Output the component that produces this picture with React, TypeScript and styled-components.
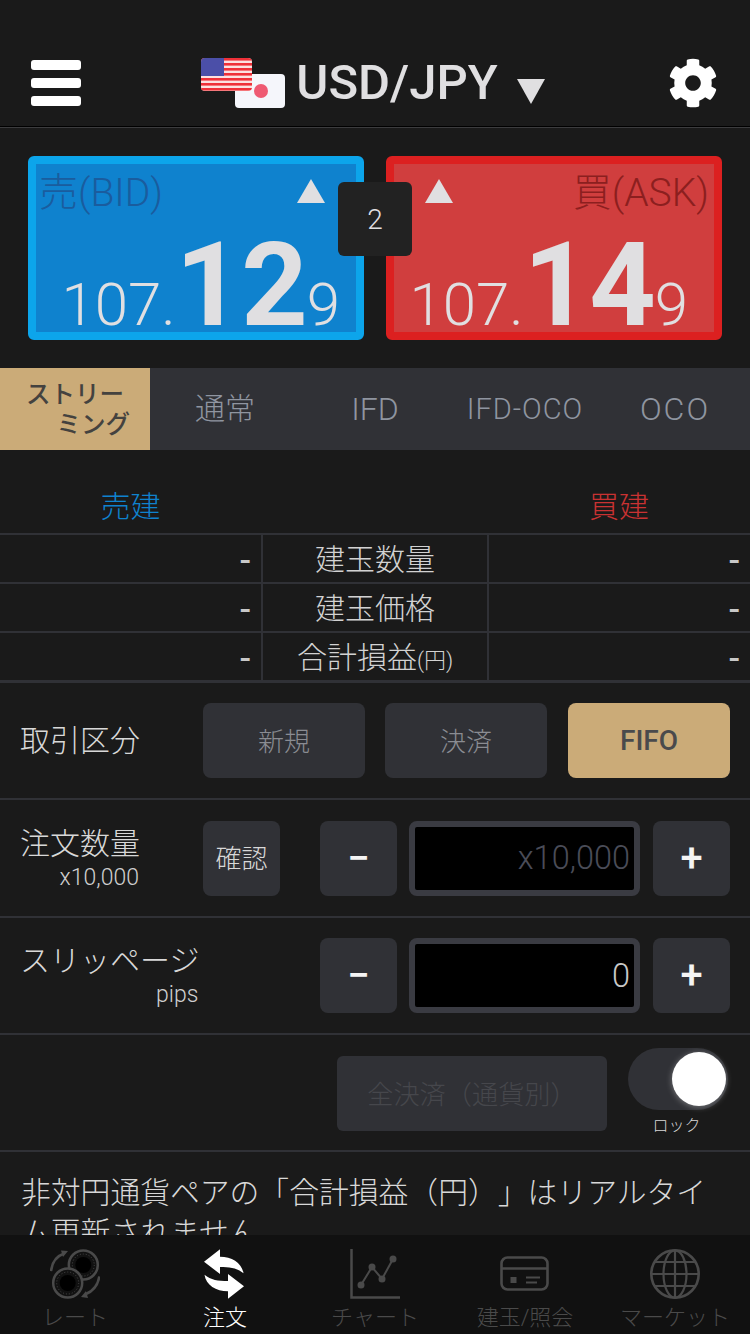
import React from 'react';
import styled, { createGlobalStyle } from 'styled-components';
import { FaCog } from 'react-icons/fa';

const GlobalStyle = createGlobalStyle`
  html, body {
    margin: 0;
    padding: 0;
    background: #1a1a1a;
  }
  * { box-sizing: border-box; }
  body {
    font-family: Roboto, "Noto Sans CJK JP", sans-serif;
    font-weight: 300;
    text-spacing-trim: space-all;
  }
`;

const Screen = styled.div`
  width: 750px;
  height: 1334px;
  display: flex;
  flex-direction: column;
  background: #1a1a1a;
  overflow: hidden;
`;

const Scroll = styled.div`
  flex: 1;
  min-height: 0;
  overflow: hidden;
`;

const Header = styled.header`
  height: 128px;
  padding: 39px 32px 1px 31px;
  display: flex;
  align-items: center;
  justify-content: space-between;
  border-bottom: 1px solid #3c3c3e;
  box-shadow: inset 0 -1px 0 #000;
`;

const Burger = styled.div`
  width: 50px;
  display: flex;
  flex-direction: column;
  gap: 8px;
`;

const BurgerBar = styled.span`
  height: 10px;
  border-radius: 3px;
  background: #fff;
`;

const Pair = styled.div`
  display: flex;
  align-items: center;
  margin-left: -3px;
`;

const PairName = styled.span`
  margin-left: 11px;
  font-size: 49px;
  font-weight: 500;
  color: #e0dfe1;
  line-height: 50px;
`;

const PairCaret = styled.span`
  margin: 18px 0 0 19px;
  width: 0;
  height: 0;
  border-left: 14px solid transparent;
  border-right: 14px solid transparent;
  border-top: 25px solid #e0dfe1;
`;

const Gear = styled(FaCog)`
  display: block;
  color: #fff;
  font-size: 50px;
`;

const Quotes = styled.section`
  position: relative;
  padding: 28px 28px 0;
  display: grid;
  grid-template-columns: 336px 336px;
  justify-content: space-between;
`;

const QuoteCard = styled.div<{ $side: 'bid' | 'ask' }>`
  height: 184px;
  border: 8px solid ${({ $side }) => ($side === 'bid' ? '#0ca5eb' : '#dc2020')};
  background: ${({ $side }) => ($side === 'bid' ? '#0f82ce' : '#d03e3e')};
  border-radius: 6px;
  display: flex;
  flex-direction: column;
  justify-content: space-between;
`;

const QuoteHead = styled.div<{ $side: 'bid' | 'ask' }>`
  display: flex;
  align-items: center;
  justify-content: space-between;
  height: 54px;
  padding: ${({ $side }) => ($side === 'bid' ? '0 31px 0 3px' : '0 5px 0 31px')};
`;

const QuoteLabel = styled.span<{ $side: 'bid' | 'ask' }>`
  font-size: 39px;
  line-height: 46px;
  margin-top: 4px;
  color: ${({ $side }) => ($side === 'bid' ? '#1a5c9e' : '#8c1f1f')};
`;

const Tick = styled.span`
  width: 0;
  height: 0;
  border-left: 14px solid transparent;
  border-right: 14px solid transparent;
  border-bottom: 24px solid #e0dfe1;
`;

const Price = styled.div<{ $side: 'bid' | 'ask' }>`
  display: flex;
  align-items: baseline;
  justify-content: flex-end;
  color: #e0dfe1;
  font-size: 60px;
  line-height: 82px;
  margin-bottom: -14px;
  font-weight: 300;
  padding-right: ${({ $side }) => ($side === 'bid' ? '16px' : '26px')};
`;

const PriceBig = styled.span`
  font-size: 116px;
  font-weight: 700;
  line-height: 82px;
  letter-spacing: -1px;
`;

const SpreadBadge = styled.div`
  position: absolute;
  left: 338px;
  top: 54px;
  width: 74px;
  height: 74px;
  border-radius: 6px;
  background: #222222;
  color: #e0dfe1;
  font-size: 28px;
  display: flex;
  align-items: center;
  justify-content: center;
`;

const OrderTabs = styled.nav`
  margin-top: 28px;
  height: 82px;
  background: #303136;
  display: grid;
  grid-template-columns: repeat(5, 150px);
`;

const OrderTab = styled.div<{ $size: number; $track?: number; $lift?: number }>`
  display: flex;
  align-items: center;
  justify-content: center;
  color: #8f95a0;
  font-size: ${({ $size }) => $size}px;
  letter-spacing: ${({ $track }) => $track ?? 0}px;
  padding-bottom: ${({ $lift }) => $lift ?? 0}px;
`;

const StreamingTab = styled.div`
  background: #cbab78;
  color: #44423f;
  font-size: 24.5px;
  font-weight: 500;
  line-height: 30px;
  display: flex;
  flex-direction: column;
  align-items: flex-end;
  justify-content: center;
  padding: 2px 20px 0 0;
`;

const StreamingFirstLine = styled.span`
  margin-right: 6px;
`;

const SideHeads = styled.div`
  height: 83px;
  display: grid;
  grid-template-columns: 261px 227px 1fr;
  align-items: end;
  padding-bottom: 6px;
  font-size: 30px;
  line-height: 40px;
`;

const SideHead = styled.span<{ $color: string }>`
  text-align: center;
  color: ${({ $color }) => $color};
`;

const PosTable = styled.div`
  border-top: 2px solid #303136;
  border-bottom: 3px solid #303136;
`;

const PosRow = styled.div`
  height: 47px;
  display: grid;
  grid-template-columns: 261px 2px 224px 2px 1fr;
  & + & {
    border-top: 2px solid #303136;
    height: 49px;
  }
`;

const PosValue = styled.div`
  display: flex;
  align-items: center;
  justify-content: flex-end;
  padding-right: 10px;
  color: #c8c8c8;
  font-size: 34px;
  font-weight: 500;
`;

const PosDivider = styled.div`
  background: #303136;
`;

const PosName = styled.div`
  display: flex;
  align-items: center;
  justify-content: center;
  color: #d2d2d2;
  font-size: 30px;
  padding-bottom: 5px;
`;

const Yen = styled.small`
  font-size: 22px;
  margin-top: 6px;
`;

const FormRow = styled.div<{ $height?: number }>`
  height: ${({ $height }) => $height ?? 117}px;
  padding: 0 20px;
  display: flex;
  align-items: center;
  border-bottom: 2px solid #303136;
`;

const RowLabel = styled.div`
  color: #d8d8d8;
  font-size: 30px;
  line-height: 36px;
  display: flex;
  flex-direction: column;
  align-items: flex-end;
`;

const LabelSub = styled.span`
  font-size: 23px;
  line-height: 28px;
  color: #cfcfcf;
  margin: 2px 1px 0 0;
`;

const TypeButtons = styled.div`
  margin-left: auto;
  display: grid;
  grid-template-columns: 162px 162px 163px;
  column-gap: 20px;
  & > :last-child {
    justify-self: end;
    width: 162px;
  }
`;

const FlatButton = styled.div<{ $active?: boolean }>`
  height: 75px;
  border-radius: 8px;
  background: ${({ $active }) => ($active ? '#cbab78' : '#303136')};
  color: ${({ $active }) => ($active ? '#4a4a4c' : '#8a8c92')};
  font-size: ${({ $active }) => ($active ? '28px' : '26px')};
  font-weight: ${({ $active }) => ($active ? 500 : 300)};
  padding-bottom: ${({ $active }) => ($active ? '0' : '3px')};
  display: flex;
  align-items: center;
  justify-content: center;
`;

const ConfirmButton = styled(FlatButton)`
  width: 77px;
  color: #d8d8d8;
`;

const LabelColumn = styled.div`
  width: 183px;
  display: flex;
  padding-top: 2px;
`;

const Stepper = styled.div`
  margin-left: auto;
  display: grid;
  grid-template-columns: 77px 231px 78px;
  column-gap: 12px;
  width: 410px;
`;

const StepButton = styled.div`
  width: 77px;
  height: 75px;
  border-radius: 8px;
  background: #303136;
  color: #f4f4f4;
  font-size: 40px;
  font-weight: 500;
  display: flex;
  align-items: center;
  justify-content: center;
  &:last-child {
    justify-self: end;
  }
`;

const StepField = styled.div<{ $muted?: boolean }>`
  height: 75px;
  border: 6px solid #3a3b42;
  border-radius: 8px;
  background: #000;
  color: ${({ $muted }) => ($muted ? '#4a4c58' : '#c8c8c8')};
  font-size: 32.5px;
  display: flex;
  align-items: center;
  justify-content: flex-end;
  padding-right: 4px;
`;

const CloseRow = styled(FormRow)`
  position: relative;
  justify-content: flex-end;
  padding: 0 0 0 337px;
`;

const CloseAllButton = styled.div`
  width: 270px;
  height: 75px;
  margin: 2px auto 0 0;
  border-radius: 6px;
  background: #303136;
  color: #46474c;
  font-size: 26.2px;
  padding-bottom: 2px;
  display: flex;
  align-items: center;
  justify-content: center;
`;

const LockBox = styled.div`
  position: absolute;
  left: 628px;
  top: 13px;
  width: 100px;
  display: flex;
  flex-direction: column;
  align-items: center;
`;

const LockTrack = styled.div`
  width: 100px;
  height: 62px;
  border-radius: 31px;
  background: #303136;
  display: flex;
  align-items: center;
  justify-content: flex-end;
  padding-right: 2px;
`;

const LockKnob = styled.div`
  width: 54px;
  height: 54px;
  border-radius: 50%;
  background: #fff;
  box-shadow: 0 1px 6px rgba(255, 255, 255, 0.35);
`;

const LockText = styled.span`
  color: #d8d8d8;
  font-size: 16px;
  line-height: 20px;
  margin: 6px 0 0 -3px;
`;

const Notice = styled.p`
  margin: 0;
  padding: 21px 20px 0 21px;
  color: #d8d8d8;
  font-size: 29.8px;
  line-height: 40px;
`;

const TabBar = styled.nav`
  height: 99px;
  background: #111111;
  display: grid;
  grid-template-columns: repeat(5, 150px);
  flex: none;
`;

const TabItem = styled.div<{ $active?: boolean }>`
  display: flex;
  flex-direction: column;
  align-items: center;
  color: ${({ $active }) => ($active ? '#ffffff' : '#4a4a4a')};
  font-size: 22px;
  line-height: 26px;
`;

const TabLabel = styled.span`
  margin-top: 6px;
`;

const TabIcon = styled.svg`
  display: block;
  margin-top: 14px;
  width: 50px;
  height: 50px;
`;

const FlagPair = () => (
  <svg width="84" height="50" viewBox="0 0 84 50" style={{ display: 'block' }}>
    <rect x="34" y="16" width="50" height="34" rx="4" fill="#f5f6fb" />
    <circle cx="60" cy="33" r="7" fill="#ef5a72" />
    <clipPath id="usClip">
      <rect x="0" y="0" width="51" height="33" rx="4" />
    </clipPath>
    <g clipPath="url(#usClip)">
      <rect width="51" height="33" fill="#fbe0e0" />
      {[0, 5, 10, 15, 20, 25, 30].map((y) => (
        <rect key={y} y={y} width="51" height="2.6" fill="#ef3038" />
      ))}
      <rect width="23" height="18" fill="#4b4fa8" />
    </g>
  </svg>
);

const RateIcon = () => (
  <TabIcon viewBox="0 0 50 50" fill="none" stroke="#4a4a4a">
    <path d="M1 22C2 13 7 7 14 4.5M49.3 27.500C48 36 43 42 36 45" strokeWidth="2.5" />
    <path d="M18 2L11 1.500L13 8ZM31 48L38 49L36 42Z" fill="#4a4a4a" stroke="none" />
    <circle cx="33.300" cy="16" r="14.500" fill="#111" strokeWidth="2.500" />
    <circle cx="33.300" cy="16" r="11" strokeWidth="1" strokeDasharray="1 2" />
    <circle cx="33.300" cy="16" r="8" fill="#000" stroke="none" />
    <circle cx="17.700" cy="34" r="14.500" fill="#111" strokeWidth="2.500" />
    <circle cx="17.700" cy="34" r="11" strokeWidth="1" strokeDasharray="1 2" />
    <circle cx="17.700" cy="34" r="8" fill="#000" stroke="none" />
  </TabIcon>
);

const OrderIcon = () => (
  <TabIcon viewBox="-4 0 50 50" fill="#fff">
    <path d="M0 12.700L16 0.300V7.700C28 7.700 38 14 39.500 24.300C33 19 26 18 16 18V25Z" />
    <path d="M40 37.300L24 49.700V42.300C12 42.300 2 36 0.500 25.700C7 31 14 32 24 32V25Z" />
  </TabIcon>
);

const ChartIcon = () => (
  <TabIcon viewBox="0 0 50 50" fill="#4a4a4a" stroke="#4a4a4a">
    <path d="M1.500 0V48.500H50" fill="none" strokeWidth="2.500" />
    <path d="M11 36L22 18L32 30L43 10" fill="none" strokeWidth="2" />
    <circle cx="11" cy="36" r="3.500" stroke="none" />
    <circle cx="22" cy="18" r="3.500" stroke="none" />
    <circle cx="32" cy="30" r="3.500" stroke="none" />
    <circle cx="43" cy="10" r="3.500" stroke="none" />
  </TabIcon>
);

const CardIcon = () => (
  <TabIcon viewBox="0 0 50 50" fill="none" stroke="#4a4a4a">
    <rect x="1.500" y="8.500" width="46" height="32" rx="6" strokeWidth="2.600" />
    <path d="M1.500 19.500H47.500" strokeWidth="2.600" />
    <rect x="10.500" y="28" width="6" height="6" fill="#4a4a4a" stroke="none" />
    <path d="M26 28.500H40M26 33.500H37" strokeWidth="2" />
  </TabIcon>
);

const GlobeIcon = () => (
  <TabIcon viewBox="0 0 50 50" fill="none" stroke="#4a4a4a" strokeWidth="2.200">
    <circle cx="25" cy="25" r="23.700" strokeWidth="2.600" />
    <ellipse cx="25" cy="25" rx="11.500" ry="23.700" />
    <path d="M25 1V49M1.300 25H48.700M4.500 13H45.500M4.500 37H45.500" />
  </TabIcon>
);

const positionRows: { key: string; label: React.ReactNode }[] = [
  { key: 'qty', label: '建玉数量' },
  { key: 'price', label: '建玉価格' },
  { key: 'pl', label: <>合計損益<Yen>(円)</Yen></> },
];

const navItems = [
  { label: 'レート', icon: <RateIcon /> },
  { label: '注文', icon: <OrderIcon />, active: true },
  { label: 'チャート', icon: <ChartIcon /> },
  { label: '建玉/照会', icon: <CardIcon /> },
  { label: 'マーケット', icon: <GlobeIcon /> },
];

const App = () => (
  <Screen>
    <GlobalStyle />
    <Scroll>
      <Header>
        <Burger>
          <BurgerBar />
          <BurgerBar />
          <BurgerBar />
        </Burger>
        <Pair>
          <FlagPair />
          <PairName>USD/JPY</PairName>
          <PairCaret />
        </Pair>
        <Gear />
      </Header>

      <Quotes>
        <QuoteCard $side="bid">
          <QuoteHead $side="bid">
            <QuoteLabel $side="bid">売(BID)</QuoteLabel>
            <Tick />
          </QuoteHead>
          <Price $side="bid">
            107.<PriceBig>12</PriceBig>9
          </Price>
        </QuoteCard>
        <QuoteCard $side="ask">
          <QuoteHead $side="ask">
            <Tick />
            <QuoteLabel $side="ask">買(ASK)</QuoteLabel>
          </QuoteHead>
          <Price $side="ask">
            107.<PriceBig>14</PriceBig>9
          </Price>
        </QuoteCard>
        <SpreadBadge>2</SpreadBadge>
      </Quotes>

      <OrderTabs>
        <StreamingTab>
          <StreamingFirstLine>ストリー</StreamingFirstLine>
          <span>ミング</span>
        </StreamingTab>
        <OrderTab $size={30} $lift={6}>通常</OrderTab>
        <OrderTab $size={32}>IFD</OrderTab>
        <OrderTab $size={29} $track={1}>IFD-OCO</OrderTab>
        <OrderTab $size={32} $track={2}>OCO</OrderTab>
      </OrderTabs>

      <SideHeads>
        <SideHead $color="#0f82ce">売建</SideHead>
        <span />
        <SideHead $color="#c93232">買建</SideHead>
      </SideHeads>

      <PosTable>
        {positionRows.map((row) => (
          <PosRow key={row.key}>
            <PosValue>-</PosValue>
            <PosDivider />
            <PosName>{row.label}</PosName>
            <PosDivider />
            <PosValue>-</PosValue>
          </PosRow>
        ))}
      </PosTable>

      <FormRow>
        <RowLabel>取引区分</RowLabel>
        <TypeButtons>
          <FlatButton>新規</FlatButton>
          <FlatButton>決済</FlatButton>
          <FlatButton $active>FIFO</FlatButton>
        </TypeButtons>
      </FormRow>

      <FormRow $height={118}>
        <LabelColumn>
          <RowLabel>
            注文数量
            <LabelSub>x10,000</LabelSub>
          </RowLabel>
        </LabelColumn>
        <ConfirmButton>確認</ConfirmButton>
        <Stepper>
          <StepButton>−</StepButton>
          <StepField $muted>x10,000</StepField>
          <StepButton>+</StepButton>
        </Stepper>
      </FormRow>

      <FormRow>
        <RowLabel>
          スリッページ
          <LabelSub>pips</LabelSub>
        </RowLabel>
        <Stepper>
          <StepButton>−</StepButton>
          <StepField>0</StepField>
          <StepButton>+</StepButton>
        </Stepper>
      </FormRow>

      <CloseRow>
        <CloseAllButton>全決済（通貨別）</CloseAllButton>
        <LockBox>
          <LockTrack>
            <LockKnob />
          </LockTrack>
          <LockText>ロック</LockText>
        </LockBox>
      </CloseRow>

      <Notice>非対円通貨ペアの「合計損益（円）」はリアルタイム更新されません。</Notice>
    </Scroll>

    <TabBar>
      {navItems.map((item) => (
        <TabItem key={item.label} $active={item.active}>
          {item.icon}
          <TabLabel>{item.label}</TabLabel>
        </TabItem>
      ))}
    </TabBar>
  </Screen>
);

export default App;
